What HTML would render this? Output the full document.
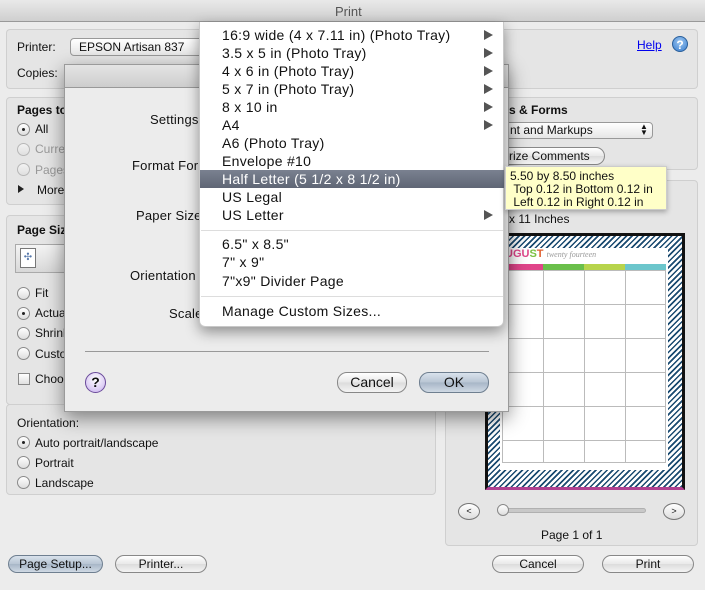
<!DOCTYPE html>
<html><head><meta charset="utf-8"><style>
*{margin:0;padding:0;box-sizing:border-box}
body{width:705px;height:590px;overflow:hidden;background:#ececec;font-family:"Liberation Sans",sans-serif;font-size:12px;color:#111;position:relative}
.a{position:absolute;white-space:nowrap}
.panel{position:absolute;border:1px solid #cfcfcf;border-radius:4px;background:#e5e5e5}
.rad{position:absolute;width:13px;height:13px;border-radius:50%;border:1px solid #8a8a8a;background:linear-gradient(#fff,#ddd)}
.rad.on::after{content:"";position:absolute;left:4px;top:4px;width:3px;height:3px;border-radius:50%;background:#222}
.btn{position:absolute;height:18px;border:1px solid #888;border-radius:9px;background:linear-gradient(#fff,#e8e8e8 50%,#dcdcdc 51%,#f4f4f4);text-align:center;font-size:12px;line-height:16px}
.blue{background:linear-gradient(#d9e2ec,#b8c5d3 50%,#a7b6c7 51%,#cfd9e4);border-color:#6f7f90}
.mi{position:absolute;left:22px;font-size:14px;letter-spacing:.3px;height:18px;line-height:18px}
.arr{position:absolute;left:284px;width:0;height:0;border-left:9px solid #555;border-top:5px solid transparent;border-bottom:5px solid transparent}
.lb{font-size:13px;letter-spacing:.2px}
</style></head><body>
<div class="a" style="left:0;top:0;width:705px;height:22px;background:linear-gradient(#e9e9e9,#cfcfcf);border-bottom:1px solid #999"></div>
<div class="a" style="left:335px;top:4px;font-size:13px;color:#555">Print</div>

<div class="panel" style="left:6px;top:29px;width:202px;height:60px;border-right:none;border-radius:4px 0 0 4px"></div>
<div class="panel" style="left:500px;top:29px;width:198px;height:60px;border-left:none;border-radius:0 4px 4px 0"></div>
<div class="a" style="left:17px;top:40px">Printer:</div>
<div class="a" style="left:70px;top:38px;width:140px;height:18px;border:1px solid #999;border-radius:4px;background:linear-gradient(#fff,#e6e6e6);padding-left:8px;line-height:16px">EPSON Artisan 837</div>
<div class="a" style="left:17px;top:66px">Copies:</div>
<div class="a" style="left:637px;top:38px;color:#00e;text-decoration:underline;font-size:12px">Help</div>
<div class="a" style="left:672px;top:36px;width:16px;height:16px;border-radius:50%;background:radial-gradient(circle at 50% 35%,#9cc6f0,#3a7fd0);color:#fff;font-weight:bold;font-size:12px;text-align:center;line-height:16px;border:1px solid #2a5f9a">?</div>

<div class="panel" style="left:6px;top:97px;width:80px;height:108px"></div>
<div class="a" style="left:17px;top:103px;font-weight:bold">Pages to</div>
<div class="rad on" style="left:17px;top:123px"></div><div class="a" style="left:35px;top:122px">All</div>
<div class="rad" style="left:17px;top:143px;opacity:.5"></div><div class="a" style="left:35px;top:142px;color:#999">Curre</div>
<div class="rad" style="left:17px;top:163px;opacity:.5"></div><div class="a" style="left:35px;top:163px;color:#999">Pages</div>
<div class="a" style="left:18px;top:185px;width:0;height:0;border-left:6px solid #222;border-top:4px solid transparent;border-bottom:4px solid transparent"></div>
<div class="a" style="left:37px;top:183px">More</div>

<div class="panel" style="left:6px;top:215px;width:80px;height:190px"></div>
<div class="a" style="left:17px;top:223px;font-weight:bold">Page Siz</div>
<div class="a" style="left:15px;top:244px;width:60px;height:29px;border:1px solid #aaa;background:linear-gradient(#f4f4f4,#d8d8d8)"></div>
<div class="a" style="left:20px;top:248px;width:16px;height:20px;border:1px solid #777;background:#fff;color:#5577aa;font-size:10px;text-align:center;line-height:18px">✣</div>
<div class="rad" style="left:17px;top:287px"></div><div class="a" style="left:35px;top:286px">Fit</div>
<div class="rad on" style="left:17px;top:307px"></div><div class="a" style="left:35px;top:306px">Actua</div>
<div class="rad" style="left:17px;top:327px"></div><div class="a" style="left:35px;top:326px">Shrink</div>
<div class="rad" style="left:17px;top:347px"></div><div class="a" style="left:35px;top:347px">Custo</div>
<div class="a" style="left:18px;top:373px;width:12px;height:12px;border:1px solid #888;background:linear-gradient(#fff,#e0e0e0)"></div><div class="a" style="left:35px;top:372px">Choos</div>

<div class="panel" style="left:6px;top:404px;width:430px;height:91px"></div>
<div class="a" style="left:17px;top:416px">Orientation:</div>
<div class="rad on" style="left:17px;top:436px"></div><div class="a" style="left:35px;top:436px">Auto portrait/landscape</div>
<div class="rad" style="left:17px;top:456px"></div><div class="a" style="left:35px;top:456px">Portrait</div>
<div class="rad" style="left:17px;top:476px"></div><div class="a" style="left:35px;top:476px">Landscape</div>

<div class="panel" style="left:445px;top:97px;width:253px;height:73px"></div>
<div class="a" style="left:509px;top:103px;font-weight:bold">s &amp; Forms</div>
<div class="a" style="left:500px;top:122px;width:153px;height:17px;border:1px solid #999;border-radius:4px;background:linear-gradient(#fff,#e6e6e6);padding-left:9px;line-height:15px">nt and Markups</div>
<div class="a" style="left:640px;top:124px;font-size:8px;line-height:6px">▲<br>▼</div>
<div class="btn" style="left:498px;top:147px;width:107px;text-align:left;padding-left:10px">rize Comments</div>

<div class="panel" style="left:445px;top:180px;width:253px;height:366px"></div>
<div class="a" style="left:509px;top:212px">x 11 Inches</div>
<div class="a" style="left:485px;top:233px;width:200px;height:257px;border:3px solid #111;border-bottom-color:#b04090;background:repeating-linear-gradient(-45deg,#1a4a70 0 1.6px,#fff 1.6px 4px)"></div>
<div class="a" style="left:500px;top:248px;width:168px;height:222px;background:#fff"></div>
<div class="a" style="left:505px;top:248px;font-size:11px;font-weight:bold;color:#e0458a">UGU<span style="color:#7ac043">S</span><span style="color:#e06030">T</span> <span style="font-weight:normal;font-size:8px;color:#999;font-family:'Liberation Serif',serif;font-style:italic">twenty fourteen</span></div>
<div class="a" style="left:502px;top:264px;width:41px;height:6px;background:#e0458a"></div>
<div class="a" style="left:543px;top:264px;width:41px;height:6px;background:#6abf4b"></div>
<div class="a" style="left:584px;top:264px;width:41px;height:6px;background:#b7d44c"></div>
<div class="a" style="left:625px;top:264px;width:41px;height:6px;background:#6cc6cc"></div>
<div class="a" style="left:502px;top:270px;width:164px;height:193px;border:1px solid #bbb;background:
linear-gradient(90deg,transparent 40px,#bbb 40px 41px,transparent 41px 81px,#bbb 81px 82px,transparent 82px 122px,#bbb 122px 123px,transparent 123px),
repeating-linear-gradient(180deg,transparent 0 33px,#bbb 33px 34px)"></div>

<div class="a" style="left:458px;top:503px;width:22px;height:17px;border:1px solid #777;border-radius:50%;background:linear-gradient(#fff,#ddd);font-size:9px;text-align:center;line-height:15px">&lt;</div>
<div class="a" style="left:663px;top:503px;width:22px;height:17px;border:1px solid #777;border-radius:50%;background:linear-gradient(#fff,#ddd);font-size:9px;text-align:center;line-height:15px">&gt;</div>
<div class="a" style="left:497px;top:508px;width:149px;height:5px;border-radius:3px;background:#c8c8c8;border:1px solid #b0b0b0"></div>
<div class="a" style="left:497px;top:504px;width:12px;height:12px;border-radius:50%;border:1px solid #888;background:linear-gradient(#fff,#ddd)"></div>
<div class="a" style="left:541px;top:528px">Page 1 of 1</div>

<div class="btn blue" style="left:8px;top:555px;width:95px">Page Setup...</div>
<div class="btn" style="left:115px;top:555px;width:92px">Printer...</div>
<div class="btn" style="left:492px;top:555px;width:92px">Cancel</div>
<div class="btn" style="left:602px;top:555px;width:92px">Print</div>

<div class="a" style="left:64px;top:64px;width:445px;height:348px;background:#ececec;border:1px solid #9a9a9a;box-shadow:0 6px 18px rgba(0,0,0,.45)"></div>
<div class="a" style="left:65px;top:65px;width:443px;height:23px;background:linear-gradient(#e4e4e4,#cdcdcd);border-bottom:1px solid #999"></div>
<div class="a lb" style="left:150px;top:112px">Settings</div>
<div class="a lb" style="left:132px;top:158px">Format For</div>
<div class="a lb" style="left:136px;top:208px">Paper Size</div>
<div class="a lb" style="left:204px;top:208px">✓</div>
<div class="a lb" style="left:130px;top:268px">Orientation</div>
<div class="a lb" style="left:169px;top:306px">Scale</div>
<div class="a" style="left:85px;top:351px;width:404px;height:1px;background:#999"></div>
<div class="a" style="left:85px;top:372px;width:21px;height:21px;border-radius:50%;border:1px solid #6a4a9a;background:radial-gradient(circle at 50% 35%,#fff,#c8b0ee);font-weight:bold;font-size:14px;text-align:center;line-height:19px">?</div>
<div class="btn" style="left:337px;top:372px;width:70px;height:21px;border-radius:10px;font-size:14px;line-height:19px">Cancel</div>
<div class="btn blue" style="left:419px;top:372px;width:70px;height:21px;border-radius:10px;font-size:14px;line-height:19px">OK</div>

<div class="a" style="left:199px;top:22px;width:305px;height:305px;background:#fff;border-radius:0 0 6px 6px;box-shadow:0 5px 14px rgba(0,0,0,.4);border:1px solid #c8c8c8;border-top:none">
<div class="mi" style="top:4px">16:9 wide (4 x 7.11 in) (Photo Tray)</div><div class="arr" style="top:8px"></div>
<div class="mi" style="top:22px">3.5 x 5 in (Photo Tray)</div><div class="arr" style="top:26px"></div>
<div class="mi" style="top:40px">4 x 6 in (Photo Tray)</div><div class="arr" style="top:44px"></div>
<div class="mi" style="top:58px">5 x 7 in (Photo Tray)</div><div class="arr" style="top:62px"></div>
<div class="mi" style="top:76px">8 x 10 in</div><div class="arr" style="top:80px"></div>
<div class="mi" style="top:94px">A4</div><div class="arr" style="top:98px"></div>
<div class="mi" style="top:112px">A6 (Photo Tray)</div>
<div class="mi" style="top:130px">Envelope #10</div>
<div class="a" style="left:0;top:148px;width:304px;height:18px;background:linear-gradient(#7a8190,#5f6675)"></div>
<div class="mi" style="top:148px;color:#fff">Half Letter (5 1/2 x 8 1/2 in)</div>
<div class="mi" style="top:166px">US Legal</div>
<div class="mi" style="top:184px">US Letter</div><div class="arr" style="top:188px"></div>
<div class="a" style="left:1px;top:208px;width:302px;height:1px;background:#ddd"></div>
<div class="mi" style="top:213px">6.5" x 8.5"</div>
<div class="mi" style="top:231px">7" x 9"</div>
<div class="mi" style="top:250px">7"x9" Divider Page</div>
<div class="a" style="left:1px;top:274px;width:302px;height:1px;background:#ddd"></div>
<div class="mi" style="top:280px">Manage Custom Sizes...</div>
</div>

<div class="a" style="left:505px;top:166px;width:162px;height:44px;background:#ffffc8;border:1px solid #ccc;box-shadow:0 2px 5px rgba(0,0,0,.3);font-size:12px;line-height:13px;padding:3px 4px">5.50 by 8.50 inches<br>&nbsp;Top 0.12 in Bottom 0.12 in<br>&nbsp;Left 0.12 in Right 0.12 in</div>
</body></html>
